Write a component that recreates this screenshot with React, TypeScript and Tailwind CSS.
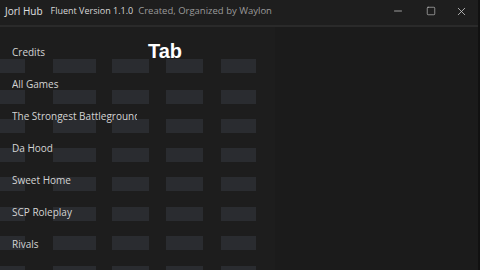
import { Minus, Square, X } from 'lucide-react'

const tabs = [
  'Credits',
  'All Games',
  'The Strongest Battlegrounds',
  'Da Hood',
  'Sweet Home',
  'SCP Roleplay',
  'Rivals',
]

const cols = ['w-[25px]', 'w-[43px] ml-[28px]', 'w-[37px] ml-[16px]', 'w-[37px] ml-[17px]', 'w-[35px] ml-[18px]']
const rows = [60, 91, 120, 149, 178, 208, 237, 267]

function GridPattern() {
  return (
    <div className="absolute inset-0 pointer-events-none">
      {rows.map((top) => (
        <div key={top} className="absolute left-0 flex h-[14px]" style={{ top: top - 28 }}>
          {cols.map((c) => (
            <div key={c} className={`${c} h-full bg-[#2a2c30]`} />
          ))}
        </div>
      ))}
    </div>
  )
}

export default function App() {
  return (
    <div className="w-[480px] h-[270px] bg-[#1b1b1b] flex flex-col overflow-hidden font-['Open_Sans',sans-serif] border-r-2 border-[#111111]">
      <div className="h-[27px] shrink-0 flex items-center pb-[3px] bg-[#1e1e1e] border-b-2 border-[#2a2a2a]">
        <span className="ml-[5px] text-[10px] text-[#e0e0e0]">Jorl Hub</span>
        <span className="ml-[8px] text-[9px] text-[#d8d8d8]">Fluent Version 1.1.0</span>
        <span className="ml-[5px] text-[9.5px] text-[#9a9a9a]">Created, Organized by Waylon</span>
        <div className="ml-auto flex items-center text-[#c8c8c8]">
          <Minus size={12} strokeWidth={1.5} className="mr-[22px]" />
          <Square size={10} strokeWidth={1.5} className="mr-[19px]" />
          <X size={13} strokeWidth={1.5} className="mr-[10px]" />
        </div>
      </div>
      <div className="relative flex-1 flex">
        <div className="w-[275px] h-full bg-[#1d1d1d]" />
        <div className="absolute inset-0">
          <GridPattern />
          <div className="relative flex">
            <div className="flex flex-col pt-[18px] pl-[12px] gap-[18px] w-[137px]">
              {tabs.map((t) => (
                <div key={t} className="h-[14px] leading-[14px] text-[10px] text-[#d4d4d4] whitespace-nowrap overflow-hidden">
                  {t}
                </div>
              ))}
            </div>
            <div className="pt-[12px] pl-[11px] text-[20px] font-semibold text-white font-['Liberation_Sans',sans-serif] leading-[24px]">
              Tab
            </div>
          </div>
        </div>
      </div>
    </div>
  )
}
